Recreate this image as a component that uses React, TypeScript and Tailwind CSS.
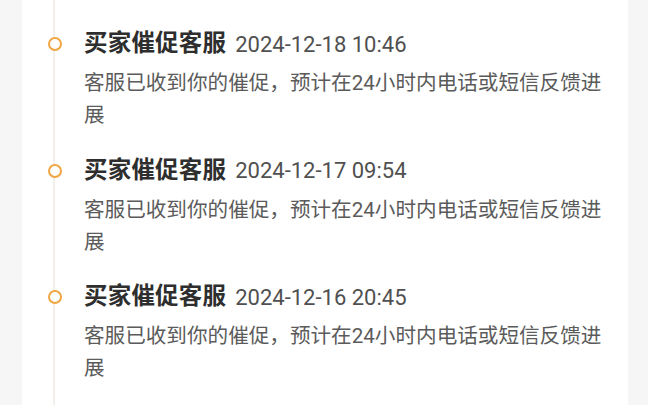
import React from "react";

const records = [
  { time: "2024-12-18 10:46" },
  { time: "2024-12-17 09:54" },
  { time: "2024-12-16 20:45" },
];

export default function App() {
  return (
    <div className="w-[648px] h-[405px] overflow-hidden bg-[#f6f6f6] flex">
      <div className="ml-[22px] w-[606px] h-full bg-white relative font-['Roboto','Noto_Sans_CJK_SC',sans-serif]">
        {/* timeline rail */}
        <div className="absolute left-[31px] top-0 bottom-0 w-[2px] bg-[#f3f0ec]" />

        <div className="pt-[28px]">
          {records.map((r, i) => (
            <div key={i} className="flex pb-[23.5px]">
              <div className="w-[62px] shrink-0 h-[32px] flex items-center pl-[26px]">
                <span className="block w-[14px] h-[14px] rounded-full border-[2.5px] border-[#f0a643] bg-white relative" />
              </div>
              <div className="w-[532px]">
                <div className="h-[32px] flex items-center whitespace-nowrap">
                  <span className="text-[23.5px] font-bold text-[#2e2e2e] tracking-[0.2px]">买家催促客服</span>
                  <span className="ml-[9px] text-[22px] text-[#505050]">{r.time}</span>
                </div>
                <p className="mt-[7px] text-[20.6px] leading-[32px] text-[#5b5b5b]">
                  客服已收到你的催促，预计在24小时内电话或短信反馈进展
                </p>
              </div>
            </div>
          ))}
        </div>
      </div>
    </div>
  );
}
